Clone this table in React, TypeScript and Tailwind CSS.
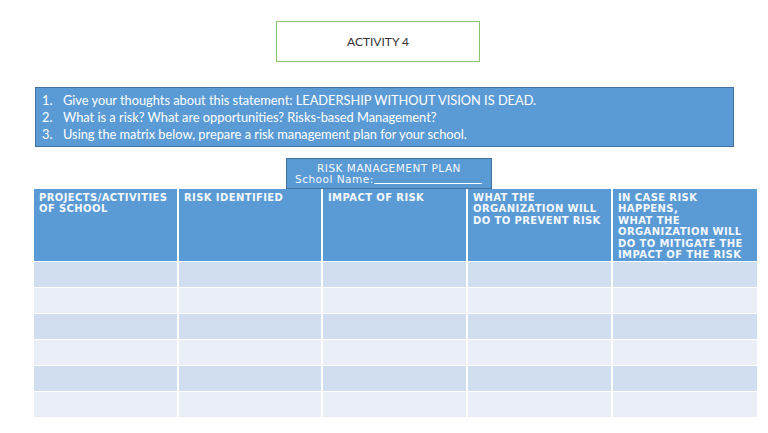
import React from "react";

const headers = [
  ["PROJECTS/ACTIVITIES", "OF SCHOOL"],
  ["RISK IDENTIFIED"],
  ["IMPACT OF RISK"],
  ["WHAT THE", "ORGANIZATION WILL", "DO TO PREVENT RISK"],
  ["IN CASE RISK", "HAPPENS,", "WHAT THE", "ORGANIZATION WILL", "DO TO MITIGATE THE", "IMPACT OF THE RISK"],
];

const questions = [
  "Give your thoughts about this statement: LEADERSHIP WITHOUT VISION IS DEAD.",
  "What is a risk? What are opportunities? Risks-based Management?",
  "Using the matrix below, prepare a risk management plan for your school.",
];

const rows = [0, 1, 2, 3, 4, 5];

const App: React.FC = () => {
  return (
    <div className="w-[768px] h-[433px] bg-white overflow-hidden flex flex-col font-['Lato',sans-serif]">
      <div className="ml-[276px] mt-[21px] w-[204px] h-[41px] border border-[#8cc46c] flex items-center justify-center text-[12px] text-[#333]">
        ACTIVITY 4
      </div>

      <div className="ml-[35px] mt-[25px] w-[699px] h-[60px] bg-[#5b9bd5] border border-[#41719c] pt-[4px] text-white text-[12.8px] leading-[17px]">
        {questions.map((q, i) => (
          <div key={i} className="flex">
            <span className="w-[27px] pl-[6px]">{i + 1}.</span>
            <span>{q}</span>
          </div>
        ))}
      </div>

      <div className="ml-[286px] mt-[11px] w-[206px] h-[31px] bg-[#5b9bd5] border border-[#41719c] font-['DejaVu_Sans',sans-serif] text-[#f4f8fc] text-[10.5px] leading-[11px] pt-[4px] tracking-[0.5px]">
        <div className="text-center">RISK MANAGEMENT PLAN</div>
        <div className="pl-[8px] flex">
          <span>School Name:</span>
          <span className="w-[108px] border-b border-white h-[10px]" />
        </div>
      </div>

      <div className="ml-[34px] w-[723px] grid grid-cols-[143px_142px_143px_143px_144px] gap-x-[2px] bg-white">
        {headers.map((h, i) => (
          <div
            key={i}
            className="h-[72px] bg-[#5b9bd5] px-[5px] pt-[3px] font-['DejaVu_Sans',sans-serif] font-bold text-[#f4f8fc] text-[10px] leading-[11.4px] tracking-[0.4px]"
          >
            {h.map((line, j) => (
              <div key={j} className="whitespace-nowrap">{line}</div>
            ))}
          </div>
        ))}
        {rows.map((r) =>
          headers.map((_, i) => (
            <div
              key={`${r}-${i}`}
              className={`h-[26px] border-t border-white ${r % 2 === 0 ? "bg-[#d0deef]" : "bg-[#e9eef7]"}`}
            />
          ))
        )}
      </div>
    </div>
  );
};

export default App;
